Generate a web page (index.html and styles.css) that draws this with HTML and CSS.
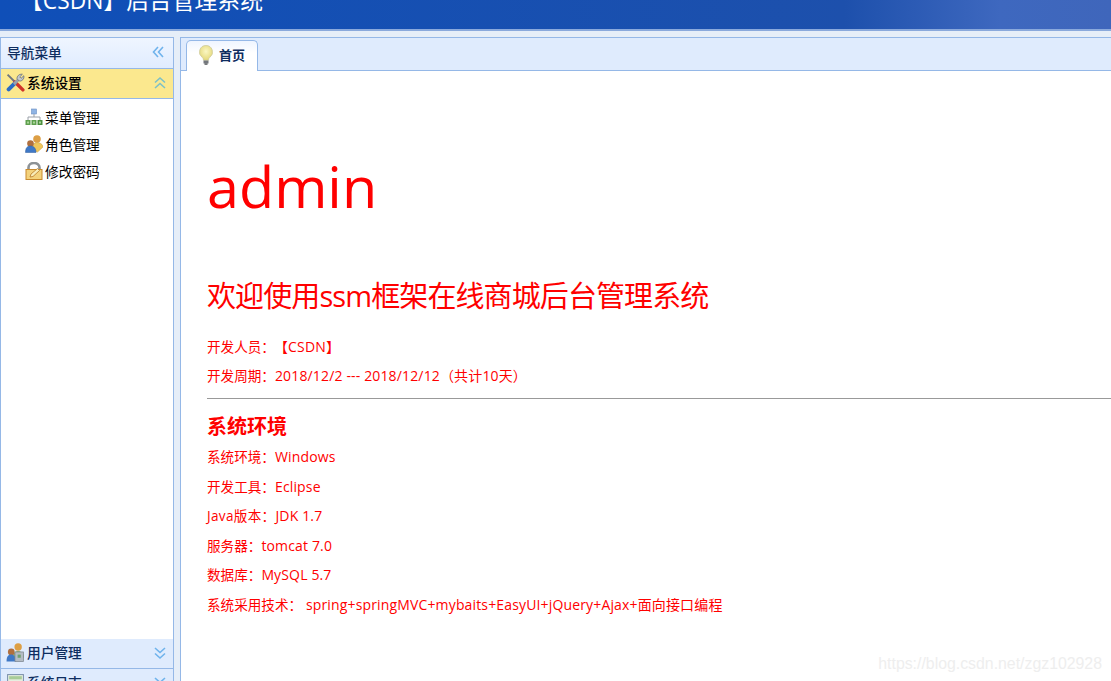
FILE: index.html
```html
<!DOCTYPE html>
<html lang="zh-CN">
<head>
<meta charset="utf-8">
<title>后台管理系统</title>
<link rel="stylesheet" href="styles.css">
</head>
<body>
<header class="top"><div class="brand">【CSDN】后台管理系统</div></header>
<div class="layout">
  <aside class="west">
    <div class="nav-title"><span>导航菜单</span>
      <svg class="chev" viewBox="0 0 14 14"><path d="M7 2 2.500 7 7 12M12 2 7.500 7 12 12"/></svg>
    </div>
    <div class="acc-head active">
      <svg class="ico" viewBox="0 0 18 18">
        <path d="M1.500 1.500 9 9" stroke="#6f7780" stroke-width="1.800" fill="none"/>
        <path d="M8.500 8.500 16 16" stroke="#d0342a" stroke-width="3.200" stroke-linecap="round" fill="none"/>
        <path d="M2.500 15.500 8 10" stroke="#2a6cc6" stroke-width="3.800" stroke-linecap="round" fill="none"/>
        <path d="M7.500 10.500 11.500 6.500" stroke="#9aa2aa" stroke-width="2.800" fill="none"/>
        <path d="M10.500 5.500c-.3-2.500 2-4.800 5-4.300L13 3.700l1.300 1.300 2.600-2.400c.6 3-1.800 5.400-4.300 5z" fill="#c3c9cf" stroke="#5d6670" stroke-width=".7"/>
      </svg>
      <span class="acc-label">系统设置</span>
      <svg class="chev2" viewBox="0 0 14 14"><path d="M2 6.500 7 2l5 4.500M2 12 7 7.500l5 4.500"/></svg>
    </div>
    <ul class="menu">
      <li><svg class="ico-s" viewBox="0 0 18 18"><rect x="6.500" y="1" width="5" height="5" fill="#8fb4e4" stroke="#6b8fc4" stroke-width=".6"/><path d="M9 6v3M3 12V9h12v3" fill="none" stroke="#9aa0a8"/><rect x="0.500" y="12" width="5" height="5" fill="#5fa04e"/><rect x="2" y="13.500" width="2" height="2" fill="#a9d598"/><rect x="6.500" y="12" width="5" height="5" fill="#5fa04e"/><rect x="8" y="13.500" width="2" height="2" fill="#a9d598"/><rect x="12.500" y="12" width="5" height="5" fill="#4d8f3e"/><rect x="14" y="13.500" width="2" height="2" fill="#a9d598"/></svg><span>菜单管理</span></li>
      <li><svg class="ico-s" viewBox="0 0 18 18"><circle cx="12" cy="4" r="3.800" fill="#dd9f45"/><path d="M7 15c0-5 2-7.500 5-7.500s6 2 6 4.500l-5.500 5z" fill="#eec65c" stroke="#c79a3c" stroke-width=".5"/><circle cx="5.500" cy="8.500" r="3.300" fill="#b06f3e"/><path d="M.5 17.500c0-5 2-6.500 5-6.500s5.500 2 5.500 6.500z" fill="#3f78c6" stroke="#2d5a9c" stroke-width=".5"/></svg><span>角色管理</span></li>
      <li><svg class="ico-s" viewBox="0 0 18 18"><path d="M3.500 8V5.500a5.500 4.500 0 0 1 11 0V8" fill="none" stroke="#8d9296" stroke-width="2.600"/><rect x="1" y="7.500" width="16" height="10" fill="#f3d27c" stroke="#c98a2c"/><path d="M5 15l1-3 6.500-5.500 2 2L8 14.500z" fill="#f7ecb8" stroke="#b87a28" stroke-width=".8"/></svg><span>修改密码</span></li>
    </ul>
    <div class="acc-head">
      <svg class="ico" viewBox="0 0 18 18"><circle cx="11.500" cy="3.800" r="3.500" fill="#dd9f45"/><path d="M6.500 14c0-4 2-6.500 5-6.500s5.500 2 5.500 6.500z" fill="#8fb56a"/><circle cx="5" cy="8.500" r="3.200" fill="#b06f3e"/><path d="M.5 17.500c0-5 2-6.500 4.500-6.500s4.500 2 4.500 6.500z" fill="#3f78c6"/><rect x="8.500" y="8.500" width="8" height="9" fill="#b4bcc4" stroke="#7b858e" stroke-width=".7"/><rect x="11" y="11" width="3" height="3" fill="#6fa070"/></svg>
      <span class="acc-label">用户管理</span>
      <svg class="chev2" viewBox="0 0 14 14"><path d="M2 2l5 4.500L12 2M2 7.500 7 12l5-4.500"/></svg>
    </div>
    <div class="acc-head">
      <svg class="ico" viewBox="0 0 18 18"><rect x="1.500" y="1.500" width="15" height="15" fill="#e6efe0" stroke="#7d93ad"/><rect x="3" y="3" width="12" height="3" fill="#a8cc98"/></svg>
      <span class="acc-label">系统日志</span>
      <svg class="chev2" viewBox="0 0 14 14"><path d="M2 2l5 4.500L12 2M2 7.500 7 12l5-4.500"/></svg>
    </div>
  </aside>
  <main class="center">
    <div class="tabs">
      <div class="tab">
        <svg class="bulb" viewBox="0 0 16 20">
          <defs><radialGradient id="glow" cx="50%" cy="40%" r="60%"><stop offset="0" stop-color="#fbf7c4"/><stop offset="1" stop-color="#e4d878"/></radialGradient></defs>
          <path d="M8 .5a6.500 6.500 0 0 0-3.800 11.800c.8.700 1.300 1.700 1.300 3h5c0-1.300.5-2.300 1.300-3A6.500 6.500 0 0 0 8 .5z" fill="url(#glow)" stroke="#c9c69a" stroke-width=".7"/>
          <rect x="5.500" y="15.500" width="5" height="3" fill="#73777c"/><rect x="6.500" y="18.500" width="3" height="1.200" fill="#3d4044"/>
        </svg>
        <span>首页</span>
      </div>
    </div>
    <div class="content">
      <h1>admin</h1>
      <h2>欢迎使用ssm框架在线商城后台管理系统</h2>
      <p class="first"><span class="k">开发人员：</span><span class="v csdn">【CSDN】</span></p>
      <p><span class="k">开发周期：</span><span class="v">2018/12/2 --- 2018/12/12（共计10天）</span></p>
      <hr>
      <h3>系统环境</h3>
      <p class="env"><span class="k">系统环境：</span><span class="v">Windows</span></p>
      <p class="env"><span class="k">开发工具：</span><span class="v">Eclipse</span></p>
      <p class="env"><span class="k java">Java版本：</span><span class="v">JDK 1.7</span></p>
      <p class="env"><span class="k">服务器：</span><span class="v">tomcat 7.0</span></p>
      <p class="env"><span class="k">数据库：</span><span class="v">MySQL 5.7</span></p>
      <p class="env"><span class="k">系统采用技术：</span><span class="v">&nbsp;spring+springMVC+mybaits+EasyUI+jQuery+Ajax+面向接口编程</span></p>
    </div>
    <div class="watermark">https://blog.csdn.net/zgz102928</div>
  </main>
</div>
</body>
</html>
```
FILE: styles.css
```css
* { box-sizing: border-box; }
html, body { margin: 0; height: 100%; overflow: hidden; }
body {
  display: flex;
  flex-direction: column;
  background: #e6eef8;
  font-family: "Open Sans", "Noto Sans CJK SC", sans-serif;
}
.top {
  height: 31px;
  flex: none;
  overflow: hidden;
  background: linear-gradient(90deg, #0f4fb8 0%, #1d50ac 76%, #3e68bf 90%, #3f66bb 100%);
  border-bottom: 2px solid #8aa9dc;
  display: flex;
  align-items: flex-end;
  padding: 0 0 13px 20px;
}
.brand {
  color: #fff;
  font-size: 22.800px;
  line-height: 30px;
  white-space: nowrap;
}
.layout {
  flex: 1;
  min-height: 0;
  display: flex;
  gap: 6px;
  padding-top: 6px;
}
.west {
  width: 174px;
  flex: none;
  display: flex;
  flex-direction: column;
  background: #fff;
  border: 1px solid #95b8e7;
  border-bottom: 0;
  overflow: hidden;
}
.nav-title {
  height: 31px;
  flex: none;
  display: flex;
  align-items: center;
  justify-content: space-between;
  padding: 0 8px 2px 6px;
  background: linear-gradient(180deg, #eff5ff, #e0ecff);
  border-bottom: 1px solid #95b8e7;
  font-size: 13.700px;
  font-weight: 500;
  color: #0e2d5f;
}
.chev { width: 14px; height: 14px; fill: none; stroke: #6fb3ec; stroke-width: 1.600; }
.acc-head {
  height: 30px;
  flex: none;
  display: flex;
  align-items: center;
  padding: 0 6px 2px 5px;
  background: #dfebfd;
  border-bottom: 1px solid #95b8e7;
  font-size: 13.700px;
  font-weight: 500;
  color: #0e2d5f;
}
.acc-head.active { background: #fbe88e; color: #000; }
.ico { width: 19px; height: 19px; flex: none; margin-right: 2px; }
.acc-label { flex: 1; margin-top: -1px; }
.chev2 { width: 14px; height: 14px; fill: none; stroke: #6fb3ec; stroke-width: 1.600; }
.active .chev2 { stroke: #7cc0c8; }
.menu {
  flex: none;
  height: 540px;
  margin: 0;
  padding: 4px 0 0 24px;
  list-style: none;
  font-size: 13.700px;
  color: #000;
}
.menu li {
  height: 27px;
  display: flex;
  align-items: center;
  gap: 2px;
}
.ico-s { width: 18px; height: 18px; flex: none; }
.center {
  flex: 1;
  min-width: 0;
  display: flex;
  flex-direction: column;
  background: #fff;
  position: relative;
  border-left: 1px solid #95b8e7;
  overflow: hidden;
}
.tabs {
  height: 34px;
  flex: none;
  display: flex;
  align-items: flex-end;
  padding-left: 5px;
  background: #dfebfd;
  border-top: 1px solid #95b8e7;
  border-bottom: 1px solid #95b8e7;
}
.tab {
  width: 72px;
  height: 31px;
  margin-bottom: -1px;
  display: flex;
  align-items: center;
  gap: 5px;
  padding: 0 0 2px 11px;
  background: linear-gradient(180deg, #eff5ff, #fff 40%);
  border: 1px solid #95b8e7;
  border-bottom: 0;
  border-radius: 5px 5px 0 0;
  font-size: 13px;
  font-weight: 600;
  color: #0e2d5f;
}
.tab span { margin-top: -1px; }
.bulb { width: 16px; height: 20px; flex: none; }
.content {
  flex: 1;
  padding: 0 0 0 26px;
  color: #f00;
  font-size: 14px;
}
h1 {
  margin: 75px 0 0;
  font-size: 57.500px;
  font-weight: 400;
  line-height: 80px;
}
h2 {
  margin: 50px 0 0;
  font-size: 29px;
  font-weight: 400;
  line-height: 40px;
  letter-spacing: -0.900px;
}
.content p {
  margin: 0;
  line-height: 29px;
  height: 29px;
  white-space: nowrap;
}
.k { font-size: 13.600px; }
.k.java { letter-spacing: 0.300px; }
.v { letter-spacing: 0.150px; }
.v.csdn { margin-left: 6px; }
.content p.first { margin-top: 16px; }
.content p.env { height: 29.500px; line-height: 29.500px; }
hr {
  margin: 8px 0 0;
  border: 0;
  border-top: 1px solid #999;
  height: 1px;
}
h3 {
  margin: 13px 0 0;
  font-size: 20px;
  font-weight: 700;
  line-height: 30px;
}
.watermark {
  position: absolute;
  right: 9px;
  bottom: 8px;
  font-family: "Liberation Sans", sans-serif;
  font-size: 15.850px;
  color: #eeeeee;
}
```
